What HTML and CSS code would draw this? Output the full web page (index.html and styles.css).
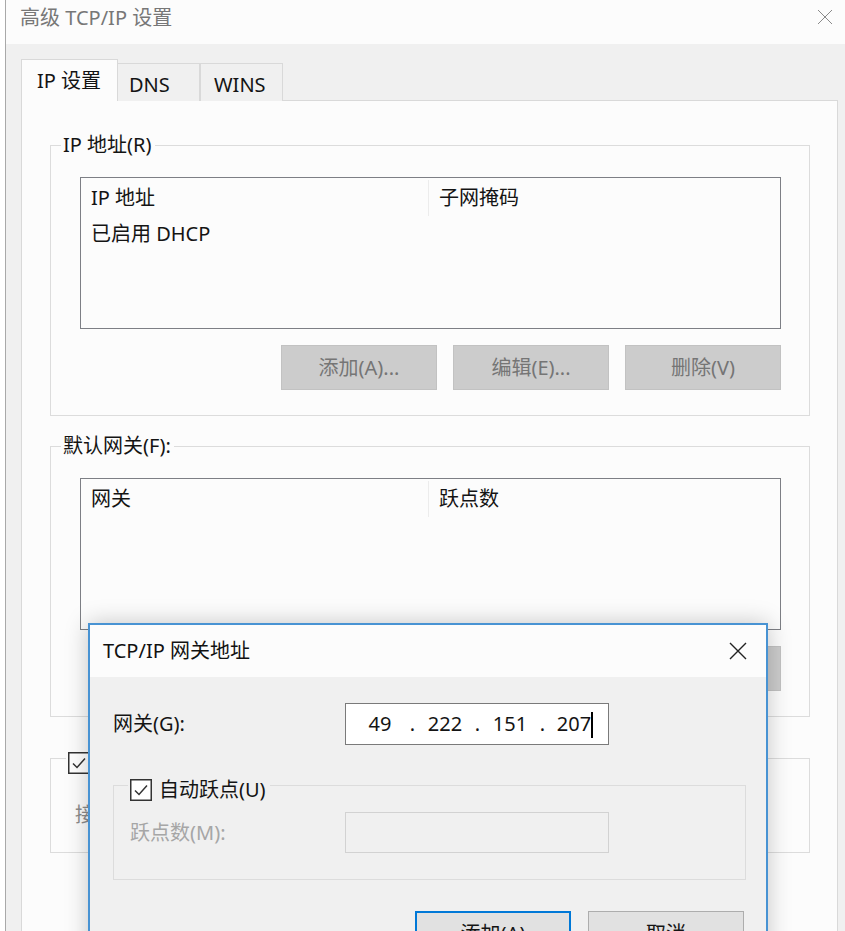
FILE: index.html
```html
<!doctype html>
<html>
  <head>
    <meta charset='utf-8'>
    <title>高级 TCP/IP 设置</title>
    <link rel="stylesheet" href="styles.css">
  </head>
  <body>

    <div class="window">
      <div class="titlebar">
        <span class="title">高级 TCP/IP 设置</span>
        <svg class="close" width="16" height="16" viewBox="0 0 16 16"><path d="M1 1L15 15M15 1L1 15"/></svg>
      </div>
      <div class="client">
        <div class="tabs">
          <div class="tab active">IP 设置</div>
          <div class="tab dns">DNS</div>
          <div class="tab wins">WINS</div>
        </div>
        <div class="panel">

          <fieldset class="group first">
            <legend>IP 地址(R)</legend>
            <div class="list">
              <div class="list-head">
                <span class="col">IP 地址</span>
                <span class="col">子网掩码</span>
              </div>
              <div class="list-row">已启用 DHCP</div>
            </div>
            <div class="buttons">
              <button class="btn" disabled>添加(A)...</button>
              <button class="btn" disabled>编辑(E)...</button>
              <button class="btn" disabled>删除(V)</button>
            </div>
          </fieldset>

          <fieldset class="group second">
            <legend>默认网关(F):</legend>
            <div class="list">
              <div class="list-head">
                <span class="col">网关</span>
                <span class="col">跃点数</span>
              </div>
            </div>
            <div class="buttons">
              <button class="btn" disabled>添加(D)...</button>
              <button class="btn" disabled>编辑(T)...</button>
              <button class="btn" disabled>删除(M)</button>
            </div>
          </fieldset>

          <fieldset class="group third">
            <legend class="check-legend">
              <svg class="check" width="22" height="22" viewBox="0 0 22 22"><rect x="0.75" y="0.75" width="20.5" height="20.5"/><path d="M5 11.5l4 4 8-9"/></svg>
              <span>自动跃点(O)</span>
            </legend>
            <div class="metric-label">接口</div>
          </fieldset>

        </div>
      </div>
    </div>

    <div class="dialog">
      <div class="dialog-title">
        <span>TCP/IP 网关地址</span>
        <svg class="close dark" width="18" height="18" viewBox="0 0 18 18"><path d="M1 1L17 17M17 1L1 17"/></svg>
      </div>
      <div class="dialog-body">
        <div class="field">
          <label class="field-label">网关(G):</label>
          <div class="ip-box">
            <span class="oct">49</span>
            <span class="dot">.</span>
            <span class="oct">222</span>
            <span class="dot">.</span>
            <span class="oct">151</span>
            <span class="dot">.</span>
            <span class="oct caret">207</span>
          </div>
        </div>

        <fieldset class="subgroup">
          <legend class="check-legend">
            <svg class="check" width="22" height="22" viewBox="0 0 22 22"><rect x="0.75" y="0.75" width="20.5" height="20.5"/><path d="M5 11.5l4 4 8-9"/></svg>
            <span>自动跃点(U)</span>
          </legend>
          <div class="field sub">
            <label class="field-label off">跃点数(M):</label>
            <div class="ip-box off"></div>
          </div>
        </fieldset>

        <div class="dialog-buttons">
          <button class="dbtn default">添加(A)</button>
          <button class="dbtn">取消</button>
        </div>
      </div>
    </div>

  </body>
</html>
```

FILE: styles.css
```css
* {
  box-sizing: border-box;
}

body {
  margin: 0;
  width: 845px;
  height: 931px;
  overflow: hidden;
  position: relative;
  background: #fff;
  font-family: 'Noto Sans', 'Noto Sans CJK SC', sans-serif;
  font-size: 20px;
  line-height: 28px;
  color: #141414;
}

/* main window */

.window {
  margin-left: 5px;
  width: 850px;
  height: 931px;
  border-left: 1px solid #a9a9a9;
  background: #f0f0f0;
}

.titlebar {
  height: 44px;
  background: #fcfcfc;
  display: flex;
  align-items: flex-start;
  justify-content: space-between;
  padding: 4px 22px 0 14px;
}

.title {
  color: #777;
}

.close {
  margin-top: 5px;
  fill: none;
  stroke: #8a8a8a;
  stroke-width: 1;
}

.close.dark {
  margin-top: 0;
  stroke: #222;
  stroke-width: 1.4;
}

.client {
  padding: 15px 0 0 15px;
}

.tabs {
  display: flex;
  align-items: flex-end;
  height: 42px;
  margin-bottom: -1px;
  position: relative;
  z-index: 1;
}

.tab {
  height: 38px;
  padding-top: 7px;
  border: 1px solid #d9d9d9;
  border-bottom: none;
  background: #f0f0f0;
}

.tab.active {
  height: 42px;
  width: 97px;
  padding-left: 15px;
  background: #fcfcfc;
}

.tab.dns {
  width: 82px;
  padding-left: 11px;
  border-left: none;
}

.tab.wins {
  width: 83px;
  padding-left: 13px;
  border-left: 1px solid #d9d9d9;
}

.panel {
  width: 817px;
  height: 840px;
  background: #fcfcfc;
  border: 1px solid #d9d9d9;
  padding: 0 27px 0 28px;
}

/* group boxes */

.group {
  margin: 0;
  border: 1px solid #dcdcdc;
  padding: 18px 28px 25px 10px;
  min-width: 0;
}

.group legend {
  padding: 0 3px 0 2px;
}

.group.first {
  margin-top: 30px;
}

.group.second {
  margin-top: 16px;
}

.group.third {
  margin-top: 25px;
  padding: 27px 28px 23px 24px;
}

.group.third .check-legend {
  margin-left: -9px;
}

.check-legend {
  display: flex;
  align-items: flex-end;
  gap: 7px;
  height: 32px;
  line-height: 22px;
}

.check {
  flex: none;
}

.check rect {
  fill: #fff;
  stroke: #333;
  stroke-width: 1.5;
}

.check path {
  fill: none;
  stroke: #333;
  stroke-width: 1.5;
}

.list {
  margin-left: 19px;
  height: 152px;
  border: 1px solid #7d7f85;
  background: #fcfcfc;
}

.list-head {
  display: flex;
  height: 40px;
  align-items: center;
}

.list-head .col {
  padding-left: 10px;
}

.list-head .col:first-child {
  width: 348px;
  height: 36px;
  line-height: 36px;
  border-right: 1px solid #ececec;
}

.list-row {
  height: 32px;
  line-height: 32px;
  padding-left: 10px;
}

.buttons {
  display: flex;
  justify-content: flex-end;
  gap: 16px;
  margin-top: 16px;
}

.btn {
  width: 156px;
  height: 45px;
  background: #cccccc;
  border: 1px solid #c2c2c2;
  color: #757575;
  font: inherit;
  padding: 0;
}

.metric-label {
  white-space: nowrap;
  color: #8c8c8c;
}

/* gateway dialog */

.dialog {
  position: absolute;
  left: 88px;
  top: 623px;
  width: 680px;
  height: 340px;
  background: #f0f0f0;
  border: 2px solid #4893d3;
  box-shadow: 0 0 22px rgba(0, 0, 0, 0.22);
}

.dialog-title {
  height: 52px;
  background: #fcfcfc;
  display: flex;
  align-items: center;
  justify-content: space-between;
  padding: 0 19px 0 13px;
  color: #111;
}

.dialog-body {
  padding: 26px 20px 0 23px;
}

.field {
  display: flex;
  align-items: center;
}

.field-label {
  width: 232px;
  flex: none;
}

.ip-box {
  width: 264px;
  height: 42px;
  background: #fff;
  border: 1px solid #7a7a7a;
  padding-left: 10px;
  display: flex;
  align-items: center;
}

.oct {
  width: 48px;
  text-align: center;
}

.dot {
  width: 17px;
  text-align: center;
}

.caret::after {
  content: '';
  display: inline-block;
  width: 2px;
  height: 26px;
  background: #000;
  vertical-align: middle;
}

.subgroup {
  margin: 24px 0 0;
  border: 1px solid #dcdcdc;
  padding: 11px 20px 26px 14px;
  min-width: 0;
}

.subgroup legend {
  padding: 0 4px 0 2px;
}

.field.sub {
  padding-left: 2px;
}

.field.sub .field-label {
  width: 215px;
}

.off {
  color: #a6a6a6;
}

.ip-box.off {
  height: 41px;
  background: #f0f0f0;
  border-color: #d2d2d2;
}

.dialog-buttons {
  display: flex;
  justify-content: flex-end;
  gap: 17px;
  margin: 31px 2px 0 0;
}

.dbtn {
  width: 156px;
  height: 46px;
  background: #e1e1e1;
  border: 1px solid #adadad;
  color: #141414;
  font: inherit;
  padding: 0;
}

.dbtn.default {
  border: 2px solid #0078d7;
}
```
